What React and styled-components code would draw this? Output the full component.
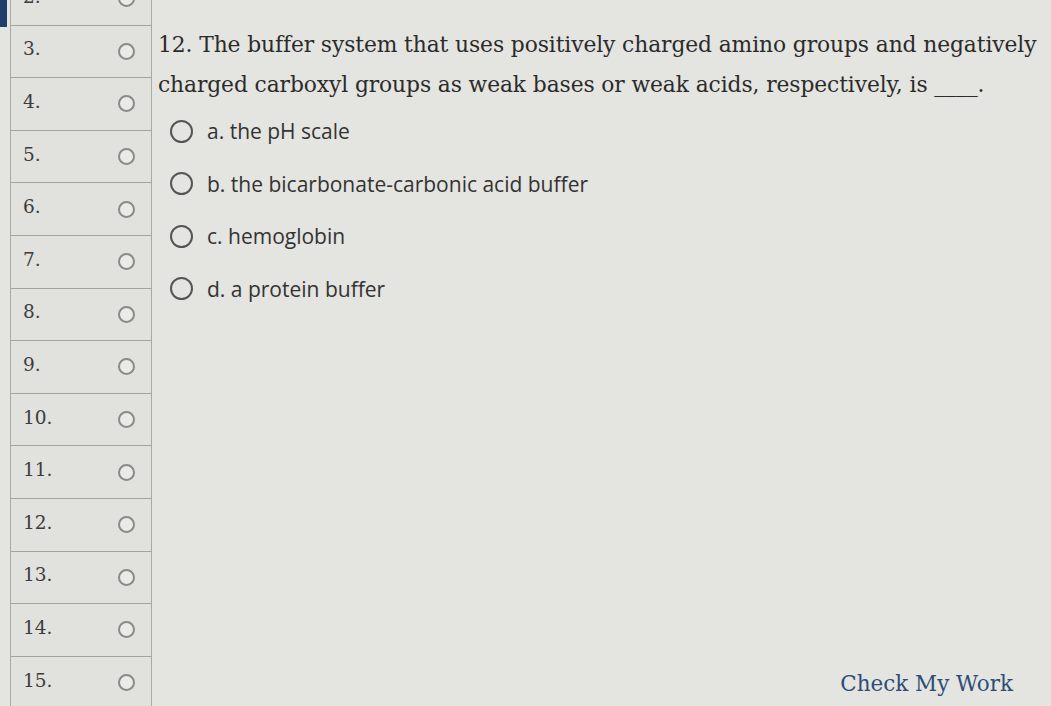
import React from "react";
import styled, { createGlobalStyle } from "styled-components";

const Global = createGlobalStyle`
  html, body { margin: 0; padding: 0; }
  body {
    background: #e4e4e0;
    width: 1051px;
    height: 706px;
    overflow: hidden;
    font-family: "Liberation Serif", serif;
  }
`;

const Page = styled.div`
  display: flex;
  height: 706px;
  overflow: hidden;
`;

const Sidebar = styled.nav`
  flex: 0 0 140px;
  margin-left: 10px;
  border-left: 1.5px solid #a9a9a6;
  border-right: 1.5px solid #a9a9a6;
  background: #e1e1dd;
  height: 760px;
  margin-top: -27px;
  display: flex;
  flex-direction: column;
`;

const NavRow = styled.div`
  position: relative;
  height: 51.6px;
  flex: 0 0 auto;
  display: flex;
  align-items: center;
  justify-content: space-between;
  padding: 0 16px 0 12px;
  border-bottom: 1.5px solid #a3a3a0;
  ${(p) =>
    p.$active &&
    `&::before {
      content: "";
      position: absolute;
      left: -11px;
      top: 8px;
      bottom: -2px;
      width: 7px;
      background: #1f3f6a;
    }`}
`;

const NavNum = styled.span`
  font-family: "DejaVu Serif", serif;
  font-size: 18.5px;
  color: #3c3c3c;
  margin-top: -5px;
`;

const NavDot = styled.span`
  width: 13px;
  height: 13px;
  border-radius: 50%;
  border: 2px solid #8a8a88;
  background: #eaeae7;
`;

const Main = styled.main`
  flex: 1;
  display: flex;
  flex-direction: column;
  padding: 25px 0 0 6px;
`;

const Question = styled.p`
  margin: 0;
  font-family: "DejaVu Serif", serif;
  font-size: 21.8px;
  line-height: 40px;
  color: #2b2b2b;
  letter-spacing: -0.1px;
  white-space: nowrap;
`;

const Options = styled.div`
  display: flex;
  flex-direction: column;
  padding-left: 12px;
`;

const Option = styled.label`
  display: flex;
  align-items: center;
  gap: 14px;
  height: 52.5px;
  font-family: "Open Sans", sans-serif;
  font-size: 21px;
  color: #333;
`;

const Radio = styled.span`
  width: 19px;
  height: 19px;
  border-radius: 50%;
  border: 2.2px solid #555;
  flex: 0 0 auto;
`;

const Footer = styled.div`
  margin-top: auto;
  display: flex;
  justify-content: flex-end;
  padding: 0 38px 10px 0;
`;

const CheckButton = styled.button`
  background: none;
  border: none;
  padding: 0;
  font-family: "DejaVu Serif", serif;
  font-size: 21.5px;
  color: #2d4d78;
  cursor: pointer;
`;

const numbers = [2, 3, 4, 5, 6, 7, 8, 9, 10, 11, 12, 13, 14, 15];
const options = [
  "a. the pH scale",
  "b. the bicarbonate-carbonic acid buffer",
  "c. hemoglobin",
  "d. a protein buffer",
];

export default function App() {
  return (
    <>
      <Global />
      <Page>
        <Sidebar>
          {numbers.map((n) => (
            <NavRow key={n} $active={n === 2}>
              <NavNum>{n}.</NavNum>
              <NavDot />
            </NavRow>
          ))}
        </Sidebar>
        <Main>
          <Question>
            12. The buffer system that uses positively charged amino groups and negatively
            <br />
            charged carboxyl groups as weak bases or weak acids, respectively, is ____.
          </Question>
          <Options>
            {options.map((o) => (
              <Option key={o}>
                <Radio />
                {o}
              </Option>
            ))}
          </Options>
          <Footer>
            <CheckButton>Check My Work</CheckButton>
          </Footer>
        </Main>
      </Page>
    </>
  );
}
